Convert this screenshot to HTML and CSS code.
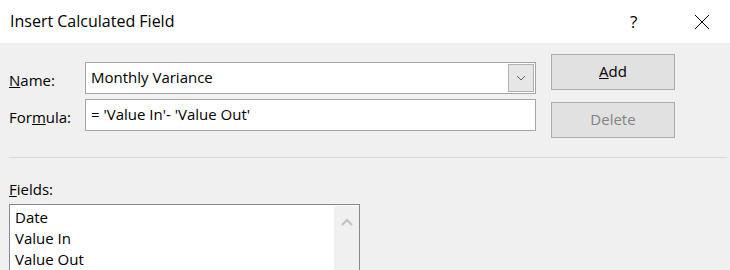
FILE: index.html
```html
<!DOCTYPE html>
<html>
<head>
<meta charset="utf-8">
<link rel="stylesheet" href="styles.css">
</head>
<body>
<div class="dialog">
  <div class="titlebar">
    <div class="title">Insert Calculated Field</div>
    <div class="help">?</div>
    <div class="close">
      <svg width="16" height="16" viewBox="0 0 16 16"><path d="M1 1 L15 15 M15 1 L1 15" stroke="#000" stroke-width="1" fill="none"/></svg>
    </div>
  </div>
  <div class="content">
    <div class="top">
      <div class="form">
        <div class="row">
          <label class="label"><u>N</u>ame:</label>
          <div class="input combo">
            <span class="value">Monthly Variance</span>
            <span class="drop">
              <svg width="10" height="6" viewBox="0 0 10 6"><path d="M1 1 L5 5 L9 1" stroke="#606060" stroke-width="1" fill="none"/></svg>
            </span>
          </div>
        </div>
        <div class="row">
          <label class="label">For<u>m</u>ula:</label>
          <div class="input">
            <span class="value">= 'Value In'- 'Value Out'</span>
          </div>
        </div>
      </div>
      <div class="buttons">
        <div class="btn"><u>A</u>dd</div>
        <div class="btn disabled">Delete</div>
      </div>
    </div>
    <div class="sep"></div>
    <div class="fields-label"><u>F</u>ields:</div>
    <div class="list">
      <div class="items">
        <div class="item">Date</div>
        <div class="item">Value In</div>
        <div class="item">Value Out</div>
      </div>
      <div class="scroll">
        <svg width="12" height="8" viewBox="0 0 12 8"><path d="M1 7 L6 2 L11 7" stroke="#c2c2c2" stroke-width="2.2" fill="none"/></svg>
      </div>
    </div>
  </div>
</div>
</body>
</html>
```
FILE: styles.css
```css
html, body {
  margin: 0;
  padding: 0;
  width: 730px;
  height: 270px;
  overflow: hidden;
  background: #f0f0f0;
}
.dialog {
  font-family: "Open Sans", "Noto Sans", sans-serif;
  font-size: 15px;
  color: #000;
  height: 270px;
  overflow: hidden;
}
.titlebar {
  height: 43px;
  background: #fff;
  display: flex;
  align-items: center;
}
.title {
  font-size: 16px;
  padding-left: 10px;
  flex: 1;
  margin-top: -1px;
}
.help {
  font-size: 17px;
  width: 20px;
  margin-right: 44px;
  color: #000;
  margin-top: -1px;
}
.close {
  width: 16px;
  height: 16px;
  margin-right: 20px;
  display: flex;
}
.content {
  padding: 0 4px 0 9px;
}
.top {
  display: flex;
  height: 114px;
}
.form {
  width: 527px;
  padding-top: 19px;
  display: flex;
  flex-direction: column;
  gap: 5px;
}
.row {
  display: flex;
  align-items: center;
  height: 32px;
}
.label {
  width: 76px;
  padding-top: 4px;
}
.input {
  box-sizing: border-box;
  width: 451px;
  height: 32px;
  background: #fff;
  border: 1px solid #a6a6a6;
  display: flex;
  align-items: center;
  padding-left: 5px;
}
.value {
  flex: 1;
  padding-bottom: 2px;
}
.drop {
  box-sizing: border-box;
  width: 26px;
  height: 28px;
  margin-right: 1px;
  background: #e6e6e6;
  border: 1px solid #b2b2b2;
  display: flex;
  align-items: center;
  justify-content: center;
}
.buttons {
  margin-left: 15px;
  padding-top: 11px;
  display: flex;
  flex-direction: column;
  gap: 12px;
}
.btn {
  box-sizing: border-box;
  width: 124px;
  height: 36px;
  background: #e1e1e1;
  border: 1px solid #adadad;
  display: flex;
  align-items: center;
  justify-content: center;
  padding-bottom: 2px;
}
.btn.disabled {
  color: #838383;
}
.sep {
  height: 1px;
  width: 718px;
  background: #d8d8d8;
}
.fields-label {
  margin-top: 21px;
  height: 24px;
}
.list {
  box-sizing: border-box;
  width: 351px;
  height: 67px;
  margin-top: 1px;
  background: #fff;
  border: 1px solid #828790;
  border-bottom: none;
  display: flex;
}
.items {
  flex: 1;
  padding: 2px 0 0 5px;
}
.item {
  height: 21px;
  line-height: 21px;
}
.scroll {
  width: 25px;
  margin-top: 1px;
  background: #f0f0f0;
  display: flex;
  justify-content: center;
  padding-top: 12px;
  align-items: flex-start;
}
```
